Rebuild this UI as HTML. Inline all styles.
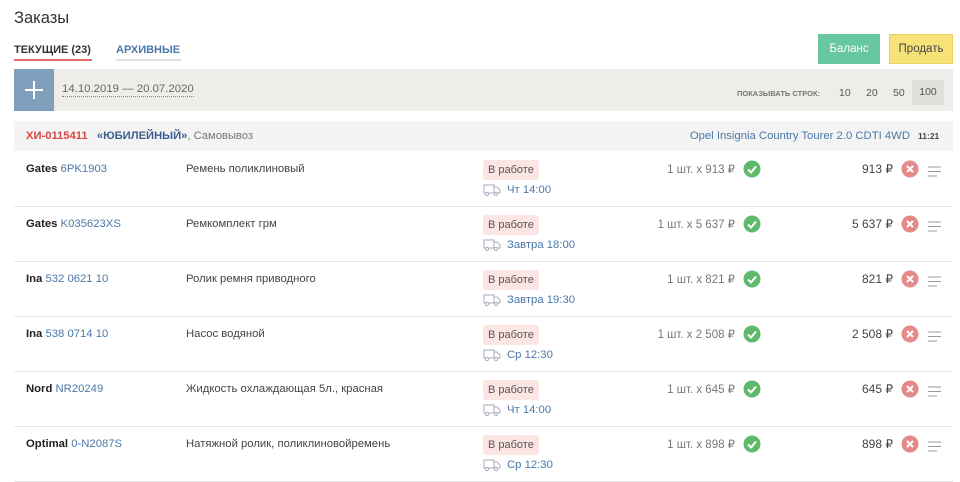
<!DOCTYPE html>
<html><head><meta charset="utf-8"><style>
*{margin:0;padding:0;box-sizing:border-box}
body{width:960px;height:481px;background:#fff;font-family:"Liberation Sans",Arial,sans-serif;position:relative;overflow:hidden;color:#333}
.a{position:absolute;white-space:nowrap}
h1{position:absolute;left:14px;top:9px;font-size:16.5px;font-weight:normal;color:#333}
.tab{font-size:11px;font-weight:bold;top:44px}
.bar{left:14px;top:69px;width:939px;height:42px;background:#efede9}
.plus{left:14px;top:69px;width:40px;height:42px;background:#7f9fbd}
.oh{left:14px;top:121px;width:939px;height:30px;background:#f4f4f4}
.row{left:14px;width:939px;height:55px;border-bottom:1px solid #e6e6e6}
.badge{background:#fbe6e4;color:#555;font-size:11px;padding:4px 5px;border-radius:3px}
.blue{color:#4a78a8}
</style></head><body>
<h1>Заказы</h1>
<div class="a tab" style="left:14px;color:#333">ТЕКУЩИЕ (23)</div>
<div class="a" style="left:14px;top:59px;width:78px;height:2px;background:#e46a6a"></div>
<div class="a tab" style="left:116px;color:#4a78a8">АРХИВНЫЕ</div>
<div class="a" style="left:116px;top:59px;width:65px;height:2px;background:#dde3ea"></div>
<div class="a" style="left:818px;top:34px;width:62px;height:30px;background:#66c7a0;color:#fff;font-size:11.5px;text-align:center;line-height:30px">Баланс</div>
<div class="a" style="left:889px;top:34px;width:64px;height:30px;background:#f7e27a;border:1px solid #ecd060;color:#444;font-size:11.5px;text-align:center;line-height:28px">Продать</div>
<div class="a bar"></div>
<div class="a plus"><svg width="40" height="42"><path d="M20 12v18M11 21h18" stroke="#fff" stroke-width="2"/></svg></div>
<div class="a" style="left:62px;top:83px;font-size:11.4px;color:#666;border-bottom:1px dotted #888;padding-bottom:1px">14.10.2019 — 20.07.2020</div>
<div class="a" style="left:737px;top:89px;font-size:7.5px;font-weight:bold;color:#777">ПОКАЗЫВАТЬ СТРОК:</div>
<div class="a" style="left:839px;top:87px;font-size:10.5px;color:#555">10</div>
<div class="a" style="left:866px;top:87px;font-size:10.5px;color:#555">20</div>
<div class="a" style="left:893px;top:87px;font-size:10.5px;color:#555">50</div>
<div class="a" style="left:912px;top:80px;width:32px;height:25px;background:#e2e0dc;font-size:10.5px;color:#555;text-align:center;line-height:25px">100</div>
<div class="a oh"></div>
<div class="a" style="left:26px;top:130px;font-size:11.2px"><b style="color:#d64545">ХИ-0115411</b>&nbsp;&nbsp; <span style="color:#3a5f8f;font-weight:bold">«ЮБИЛЕЙНЫЙ»</span><span style="color:#777">, Самовывоз</span></div>
<div class="a blue" style="right:50px;top:130px;font-size:11.3px">Opel Insignia Country Tourer 2.0 CDTI 4WD</div>
<div class="a" style="left:918px;top:131px;font-size:8.5px;font-weight:bold;color:#444">11:21</div>

<div id="rows"></div>
<script>
var d=[["Gates","6PK1903","Ремень поликлиновый","Чт 14:00","913"],
["Gates","K035623XS","Ремкомплект грм","Завтра 18:00","5 637"],
["Ina","532 0621 10","Ролик ремня приводного","Завтра 19:30","821"],
["Ina","538 0714 10","Насос водяной","Ср 12:30","2 508"],
["Nord","NR20249","Жидкость охлаждающая 5л., красная","Чт 14:00","645"],
["Optimal","0-N2087S","Натяжной ролик, поликлиновойремень","Ср 12:30","898"]];
var h="";
d.forEach(function(r,i){var y=152+i*55;
h+='<div class="a row" style="top:'+y+'px"></div>';
h+='<div class="a" style="left:26px;top:'+(y+11)+'px;font-size:11.3px"><b style="color:#222">'+r[0]+'</b> <span class="blue">'+r[1]+'</span></div>';
h+='<div class="a" style="left:186px;top:'+(y+11)+'px;font-size:11.3px;color:#444">'+r[2]+'</div>';
h+='<div class="a badge" style="left:483px;top:'+(y+8)+'px">В работе</div>';
h+='<div class="a" style="left:483px;top:'+(y+31)+'px"><svg width="18" height="14" viewBox="0 0 18 14" fill="none" stroke="#aab" stroke-width="1"><rect x="1" y="2" width="10" height="8"/><path d="M11 4h3l3 3v3h-6"/><circle cx="4" cy="11" r="1.6" fill="#fff"/><circle cx="13" cy="11" r="1.6" fill="#fff"/></svg></div>';
h+='<div class="a blue" style="left:507px;top:'+(y+32)+'px;font-size:11.3px">'+r[3]+'</div>';
h+='<div class="a" style="right:225px;top:'+(y+10)+'px;font-size:11.5px;color:#777">1 шт. x '+r[4]+' ₽</div>';
h+='<div class="a" style="left:743px;top:'+(y+8)+'px"><svg width="18" height="18"><circle cx="9" cy="9" r="8.5" fill="#5fb96d"/><path d="M5 9.5l3 3 5-6" stroke="#fff" stroke-width="2" fill="none"/></svg></div>';
h+='<div class="a" style="right:67px;top:'+(y+10)+'px;font-size:12px;color:#444">'+r[4]+' ₽</div>';
h+='<div class="a" style="left:901px;top:'+(y+8)+'px"><svg width="18" height="18"><circle cx="9" cy="9" r="8.5" fill="#e48a8a"/><path d="M6 6l6 6M12 6l-6 6" stroke="#fff" stroke-width="2"/></svg></div>';
h+='<div class="a" style="left:928px;top:'+(y+12)+'px"><svg width="14" height="11"><path d="M0 1h13M0 5.5h13M0 10h9" stroke="#999" stroke-width="1"/></svg></div>';
});
document.getElementById("rows").outerHTML=h;
</script>
</body></html>
